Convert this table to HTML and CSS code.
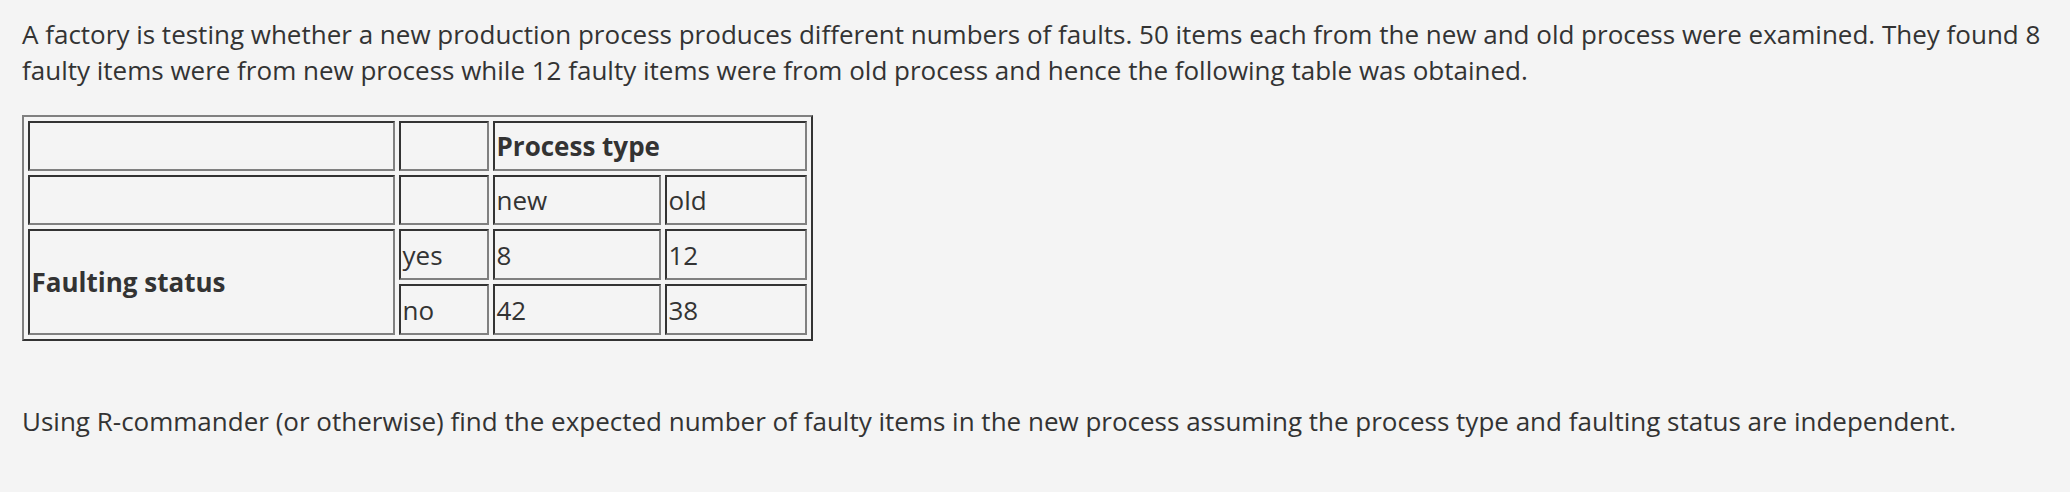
FILE: index.html
```html
<!DOCTYPE html>
<html>
<head>
<meta charset="utf-8">
<link rel="stylesheet" href="styles.css">
</head>
<body>
<div class="page">
  <p class="intro">A factory is testing whether a new production process produces different numbers of faults. 50 items each from the new and old process were examined. They found 8 faulty items were from new process while 12 faulty items were from old process and hence the following table was obtained.</p>
  <table class="data">
    <tr class="head">
      <td class="c1"></td>
      <td class="c2"></td>
      <td class="bold" colspan="2">Process type</td>
    </tr>
    <tr class="head">
      <td class="c1"></td>
      <td class="c2"></td>
      <td class="c3">new</td>
      <td class="c4">old</td>
    </tr>
    <tr class="body">
      <td class="c1 bold" rowspan="2">Faulting status</td>
      <td class="c2">yes</td>
      <td class="c3">8</td>
      <td class="c4">12</td>
    </tr>
    <tr class="body">
      <td class="c2">no</td>
      <td class="c3">42</td>
      <td class="c4">38</td>
    </tr>
  </table>
  <p class="question">Using R-commander (or otherwise) find the expected number of faulty items in the new process assuming the process type and faulting status are independent.</p>
</div>
</body>
</html>
```

FILE: styles.css
```css
html, body {
  margin: 0;
  padding: 0;
  background: #f4f4f4;
}

.page {
  padding: 16px 22px 0 22px;
  font-family: "Open Sans", "Liberation Sans", sans-serif;
  color: #333333;
}

.intro {
  margin: 0 0 27px 0;
  font-size: 26px;
  line-height: 36px;
}

.data {
  border-collapse: separate;
  border-spacing: 4px;
  border-style: solid;
  border-width: 2px;
  border-color: #808080 #333333 #333333 #808080;
  font-size: 26px;
  line-height: 36px;
  margin-left: 0;
}

.data td {
  box-sizing: border-box;
  border-style: solid;
  border-width: 2px;
  border-color: #333333 #808080 #808080 #333333;
  padding: 0 1.5px;
  vertical-align: middle;
  text-align: left;
}

.head td {
  height: 50px;
}

.body td {
  height: 51px;
}

.c1 { width: 367px; }
.c2 { width: 90px; }
.c3 { width: 168px; }
.c4 { width: 142px; }

.bold {
  font-weight: 700;
}

.question {
  margin: 62px 0 0 0;
  font-size: 26px;
  line-height: 36px;
}
```
